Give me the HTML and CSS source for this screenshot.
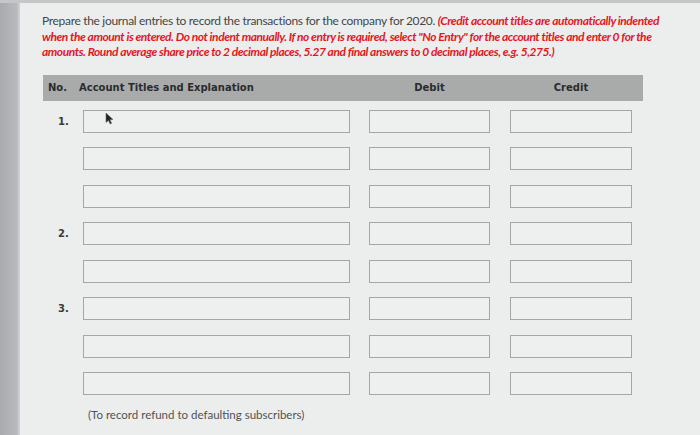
FILE: index.html
```html
<!DOCTYPE html>
<html>
<head>
<meta charset="utf-8">
<link rel="stylesheet" href="styles.css">
</head>
<body>
<div class="screen">
  <div class="strip"></div>
  <div class="page">
    <p class="intro">Prepare the journal entries to record the transactions for the company for 2020. <span class="warn">(Credit account titles are automatically indented<br>when the amount is entered. Do not indent manually. If no entry is required, select "No Entry" for the account titles and enter 0 for the<br>amounts. Round average share price to 2 decimal places, 5.27 and final answers to 0 decimal places, e.g. 5,275.)</span></p>
    <div class="journal">
      <div class="head">
        <div class="h-no">No.</div>
        <div class="h-acct">Account Titles and Explanation</div>
        <div class="h-debit">Debit</div>
        <div class="h-credit">Credit</div>
      </div>
      <div class="rows">
        <div class="no">1.</div><div class="box acct cursor-host"><svg class="cursor" width="9" height="13" viewBox="0 0 9 13"><path d="M1 1 L1 10.5 L3.4 8.4 L5.2 12 L6.6 11.3 L4.9 7.8 L8 7.6 Z" fill="#222" stroke="#666" stroke-width="0.6"/></svg></div><div class="box debit"></div><div class="box credit"></div>
        <div class="no"></div><div class="box acct"></div><div class="box debit"></div><div class="box credit"></div>
        <div class="no"></div><div class="box acct"></div><div class="box debit"></div><div class="box credit"></div>
        <div class="no">2.</div><div class="box acct"></div><div class="box debit"></div><div class="box credit"></div>
        <div class="no"></div><div class="box acct"></div><div class="box debit"></div><div class="box credit"></div>
        <div class="no">3.</div><div class="box acct"></div><div class="box debit"></div><div class="box credit"></div>
        <div class="no"></div><div class="box acct"></div><div class="box debit"></div><div class="box credit"></div>
        <div class="no"></div><div class="box acct"></div><div class="box debit"></div><div class="box credit"></div>
      </div>
      <div class="note">(To record refund to defaulting subscribers)</div>
    </div>
  </div>
</div>
</body>
</html>
```
FILE: styles.css
```css
html, body {
  margin: 0;
  padding: 0;
}
body {
  width: 700px;
  height: 435px;
  overflow: hidden;
  background: #eceeee;
}
.screen {
  display: flex;
  height: 435px;
  border-top: 3px solid #c4c6c8;
  box-sizing: border-box;
}
.strip {
  width: 20px;
  flex: none;
  background: linear-gradient(90deg, #a9aaae 0, #b9babd 17px, #d4d5d8 20px);
}
.page {
  flex: 1;
  padding: 0 0 0 22px;
}
.intro {
  margin: 10px 0 0 0;
  width: 650px;
  white-space: nowrap;
  font-family: Lato, "Open Sans", sans-serif;
  font-size: 12px;
  line-height: 15.5px;
  letter-spacing: -0.32px;
  color: #444646;
}
.warn {
  color: #e5161f;
  font-weight: bold;
  font-style: italic;
  letter-spacing: -0.45px;
}
.journal {
  margin-top: 15px;
  margin-left: 1px;
  width: 600px;
}
.head {
  display: grid;
  grid-template-columns: 36px 290px 121px 153px;
  height: 26px;
  align-items: center;
  background: #a9abab;
  font-family: "DejaVu Sans", Verdana, sans-serif;
  font-weight: bold;
  font-size: 10px;
  color: #2b2b2b;
}
.h-no { padding-left: 5px; }
.h-debit { text-align: center; }
.h-credit { text-align: center; padding-right: 11px; padding-left: 20px; }
.rows {
  margin-top: 9px;
  display: grid;
  grid-template-columns: 40px 267px 140px 142px;
  grid-auto-rows: 23px;
  row-gap: 14.5px;
  align-items: center;
}
.no {
  font-family: "DejaVu Sans", Verdana, sans-serif;
  font-weight: bold;
  font-size: 10px;
  color: #3a3a3a;
  padding-left: 15px;
}
.box {
  height: 23px;
  box-sizing: border-box;
  border: 1px solid #a3a7a7;
  background: #eef0f0;
}
.debit { margin-left: 19px; }
.credit { margin-left: 20px; }
.cursor-host { position: relative; }
.cursor {
  position: absolute;
  left: 21px;
  top: 1px;
}
.note {
  margin-top: 13px;
  padding-left: 45px;
  font-family: Lato, "Open Sans", sans-serif;
  font-size: 11.5px;
  color: #505252;
}
```
